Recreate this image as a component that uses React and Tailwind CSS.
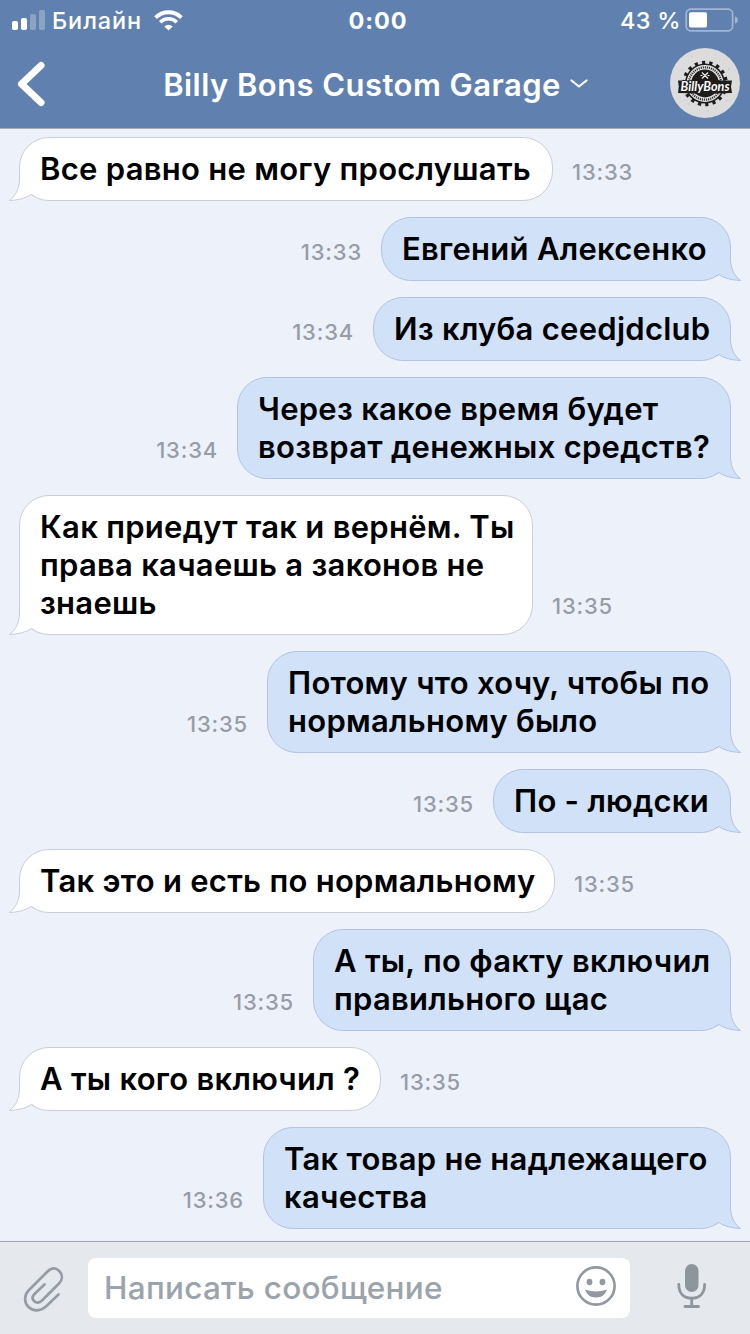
import React, { useState } from "react";
import clsx from "clsx";

const messages = [
  { id: 1, time: "13:33", width: "w-[534px]", lines: ["Все равно не могу прослушать"] },
  { id: 2, out: true, time: "13:33", width: "w-[350px]", lines: ["Евгений Алексенко"] },
  { id: 3, out: true, time: "13:34", width: "w-[358px]", lines: ["Из клуба ceedjdclub"] },
  { id: 4, out: true, time: "13:34", width: "w-[494px]", lines: ["Через какое время будет", "возврат денежных средств?"] },
  { id: 5, time: "13:35", width: "w-[514px]", lines: ["Как приедут так и вернём. Ты", "права качаешь а законов не", "знаешь"] },
  { id: 6, out: true, time: "13:35", width: "w-[464px]", lines: ["Потому что хочу, чтобы по", "нормальному было"] },
  { id: 7, out: true, time: "13:35", width: "w-[238px]", lines: ["По - людски"] },
  { id: 8, time: "13:35", width: "w-[536px]", lines: ["Так это и есть по нормальному"] },
  { id: 9, out: true, time: "13:35", width: "w-[418px]", lines: ["А ты, по факту включил", "правильного щас"] },
  { id: 10, time: "13:35", width: "w-[362px]", lines: ["А ты кого включил ?"] },
  { id: 11, out: true, time: "13:36", width: "w-[468px]", lines: ["Так товар не надлежащего", "качества"] },
];

const StatusBar = () => (
  <div className="grid h-10 grid-cols-3 items-center pl-3 pr-3">
    <div className="flex items-center">
      <svg width="33" height="20" viewBox="0 0 33 20" fill="#fff">
        <rect x="0" y="11" width="6" height="9" rx="1.8" />
        <rect x="9" y="8" width="6" height="12" rx="1.8" />
        <rect x="18" y="4" width="6" height="16" rx="1.8" opacity="0.27" />
        <rect x="27" y="0" width="6" height="20" rx="1.8" opacity="0.27" />
      </svg>
      <span className="ml-[7px] pt-0.5 text-[23.5px] font-medium tracking-[0.9px]">Билайн</span>
      <svg className="ml-3" width="29" height="21" viewBox="0 0 29 21">
        <path d="M1.6 7.6a18.2 18.2 0 0 1 25.8 0" fill="none" stroke="#fff" strokeWidth="3.8" />
        <path d="M6.2 12.3a11.7 11.7 0 0 1 16.6 0" fill="none" stroke="#fff" strokeWidth="3.5" />
        <path d="M14.5 20.6l-4.2-4.2a6 6 0 0 1 8.4 0z" fill="#fff" />
      </svg>
    </div>
    <div className="pl-1.5 pt-0.5 text-center text-[23.5px] font-bold tracking-[0.9px]">0:00</div>
    <div className="flex items-center justify-end">
      <span className="pt-0.5 text-[23.5px] font-medium tracking-[0.3px]">43 %</span>
      <svg className="ml-1" width="53" height="24" viewBox="0 0 53 24">
        <rect x="1.2" y="1.2" width="46.4" height="21.6" rx="4.5" fill="none" stroke="#fff" strokeOpacity="0.42" strokeWidth="1.7" />
        <rect x="4" y="4.2" width="18" height="15.4" rx="1.8" fill="#fff" />
        <path d="M50 8.2q3 1.2 3 3.8t-3 3.8z" fill="#fff" opacity="0.42" />
      </svg>
    </div>
  </div>
);

const GroupAvatar = () => (
  <svg className="mb-0.5" width="70" height="70" viewBox="0 0 70 70">
    <circle cx="35" cy="35" r="35" fill="#dcdcdd" />
    <g fill="#b9b9bb">
      <circle cx="12" cy="22" r="0.6" />
      <circle cx="22" cy="8" r="0.6" />
      <circle cx="46" cy="7" r="0.5" />
      <circle cx="59" cy="21" r="0.7" />
      <circle cx="9" cy="45" r="0.6" />
      <circle cx="19" cy="56" r="0.7" />
      <circle cx="38" cy="63" r="0.6" />
      <circle cx="57" cy="53" r="0.6" />
    </g>
    {/* gear */}
    <circle cx="35" cy="35.5" r="21" fill="none" stroke="#1f1c1c" strokeWidth="3.6" strokeDasharray="3.2 4.13" />
    <circle cx="35" cy="35.5" r="20" fill="#1f1c1c" />
    <circle cx="35" cy="35.5" r="16.2" fill="none" stroke="#e4e4e4" strokeWidth="4.6" />
    <circle cx="35" cy="35.5" r="16.2" fill="none" stroke="#3b3838" strokeWidth="2.2" strokeDasharray="1.2 0.9" />
    <path d="M32 24.5l6 6m0-6l-6 6m-1.500-3h2m5 0h2" stroke="#eee" strokeWidth="1.2" />
    {/* ribbon */}
    <path d="M8 32.5h10q17-2.500 34 0h10l-1 6 1 6.500-10 .3q-17 1.500-34 0L8 45l.8-6.500z" fill="#1f1c1c" />
    <text x="35" y="42.500" textAnchor="middle" textLength="49" lengthAdjust="spacingAndGlyphs" className="font-['Lato',sans-serif] text-[12.5px] font-bold italic" fill="#fff">
      BillyBons
    </text>
  </svg>
);

const Header = () => (
  <header className="h-[129px] shrink-0 border-b border-[#a5abb5] bg-[#6081b0] text-white">
    <StatusBar />
    <div className="flex h-[88px] items-center justify-between pl-[17px] pr-[10px]">
      <svg width="28" height="46" viewBox="0 0 28 46">
        <path d="M24 4.5L4.5 23 24 41.5" fill="none" stroke="#fff" strokeWidth="7" strokeLinecap="round" strokeLinejoin="round" />
      </svg>
      <div className="flex items-center pl-9">
        <h1 className="pt-px text-[31px] font-semibold leading-10 tracking-[0.45px]">Billy Bons Custom Garage</h1>
        <svg className="ml-[9px]" width="18" height="10" viewBox="0 0 18 10">
          <path d="M1.5 1.5L9 7.5l7.5-6" fill="none" stroke="#fff" strokeWidth="2.2" strokeLinecap="round" strokeLinejoin="round" />
        </svg>
      </div>
      <GroupAvatar />
    </div>
  </header>
);

const Tail = ({ out }) => (
  <svg
    className={clsx("absolute -bottom-px", out ? "-right-3" : "-left-3 -scale-x-100")}
    width="40"
    height="31"
    viewBox="0 0 40 31"
  >
    <path d="M28.5 0V11Q29.5 24 38.5 30.5Q25 30 16.5 24.5L12 20V0Z" fill={out ? "#d1e1f8" : "#fff"} />
    <path d="M28.5 0V11Q29.5 24 38.5 30.5Q25 30 16.5 24.5L14 25.8" fill="none" stroke={out ? "#b3c3e2" : "#c9ced8"} />
  </svg>
);

const Message = ({ message }) => {
  const { out, width, lines, time } = message;
  return (
    <div className={clsx("flex items-end gap-[19px]", out && "flex-row-reverse")}>
      <div
        className={clsx(
          "relative shrink-0 rounded-[30px] border px-5 py-3 text-[31px] font-semibold leading-[38px] tracking-[0.27px] text-black",
          width,
          out ? "border-[#b3c3e2] bg-[#d1e1f8]" : "border-[#c9ced8] bg-white"
        )}
      >
        <Tail out={out} />
        {lines.map((line) => (
          <p key={line} className="relative whitespace-nowrap">
            {line}
          </p>
        ))}
      </div>
      <span className="mb-[14px] text-[22px] font-medium leading-[30px] tracking-[0.8px] text-[#979ca6]">{time}</span>
    </div>
  );
};

const Composer = () => {
  const [text, setText] = useState("");

  return (
    <footer className="flex h-[93px] shrink-0 items-center border-t border-[#a3a8af] bg-[#e5e9ed] pl-[23px]">
      <svg width="42" height="48" viewBox="0 0 42 48" fill="none" stroke="#949ca4" strokeWidth="2.7" strokeLinecap="round">
        <path d="M35.5 30.5L23 42.5C17.5 47.500 10 47.500 5.5 43C1 38.500 1 31.500 5.500 26.500L24 8C28.500 3.500 33 3.800 36.300 7C39.800 10.500 39.800 15.500 36 19.500L19 36.500C16 39.300 13 39 11 37C9 35 9 32.500 11.500 30L21.500 20.500" />
      </svg>
      <div className="ml-[23px] flex h-[60px] w-[542px] items-center rounded-lg bg-white pl-4 pr-[14px]">
        <input
          type="text"
          value={text}
          placeholder="Написать сообщение"
          className="min-w-0 flex-1 text-[31.5px] font-medium tracking-[0.27px] text-black placeholder:text-[#9ba3ab] focus:outline-none"
          onChange={(e) => setText(e.target.value)}
        />
        <svg className="mb-1" width="40" height="40" viewBox="0 0 40 40" fill="#9299a1">
          <circle cx="20" cy="20" r="18.6" fill="none" stroke="#9299a1" strokeWidth="2.7" />
          <ellipse cx="13.5" cy="16" rx="2.9" ry="3.2" />
          <ellipse cx="26.5" cy="16" rx="2.9" ry="3.2" />
          <path d="M9 23.5Q20 27.5 31 23.5Q28.5 31.5 20 31.5T9 23.5Z" />
        </svg>
      </div>
      <svg className="mb-1 ml-[47px]" width="30" height="46" viewBox="0 0 30 46" fill="none" stroke="#8d959d" strokeWidth="2.8" strokeLinecap="round">
        <rect x="8" y="1" width="13.5" height="28" rx="6.75" fill="#8d959d" stroke="none" />
        <path d="M1.8 21.5C1.8 30.5 7 35.2 14.7 35.2S27.6 30.5 27.6 21.5" />
        <path d="M14.7 35.5V43.5M8 43.5H21.5" />
      </svg>
    </footer>
  );
};

const App = () => (
  <div className="flex h-[1334px] w-[750px] flex-col overflow-hidden bg-[#edf2fa] font-['Inter',sans-serif]">
    <Header />
    <main className="flex flex-1 flex-col gap-4 px-[19px] pt-2">
      {messages.map((message) => (
        <Message key={message.id} message={message} />
      ))}
    </main>
    <Composer />
  </div>
);

export default App;
